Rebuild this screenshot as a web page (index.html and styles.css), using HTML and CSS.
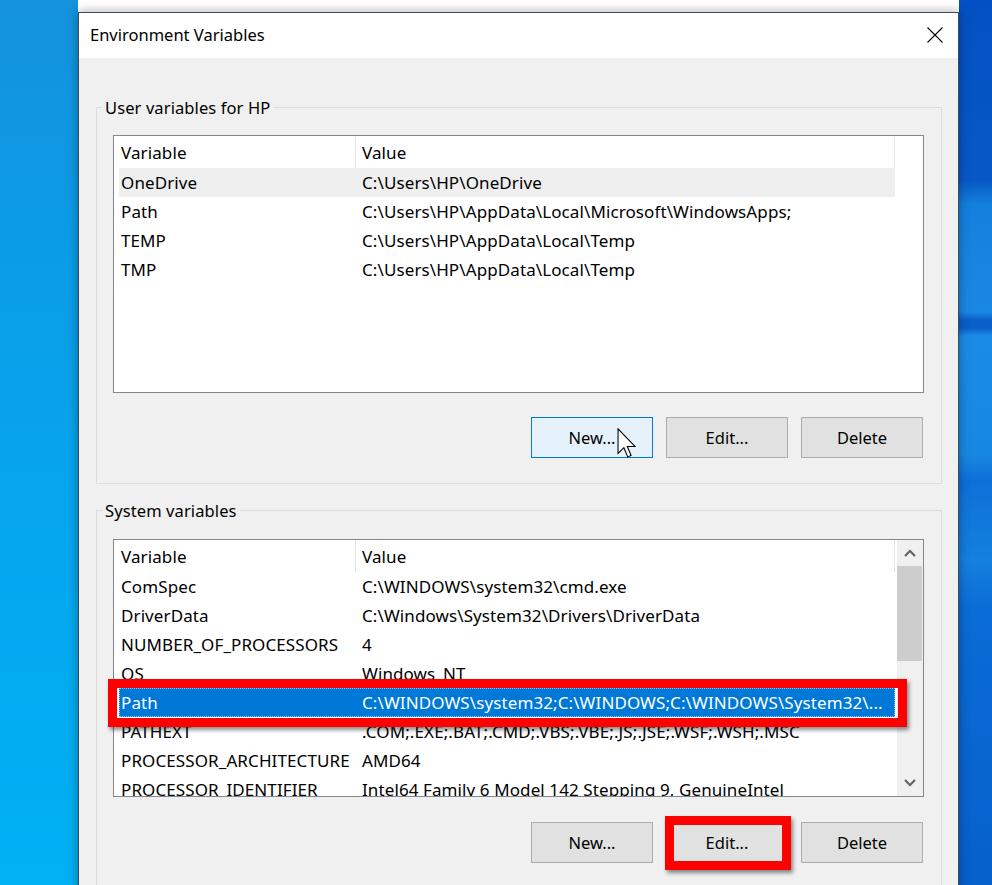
FILE: index.html
```html
<!DOCTYPE html>
<html lang="en">
<head>
  <meta charset="UTF-8">
  <title>Environment Variables</title>
  <link rel="stylesheet" href="styles.css">
</head>
<body>
  <div class="desktop">
    <div class="desk-left"></div>

    <div class="dialog">
      <div class="titlebar">
        <span class="title">Environment Variables</span>
        <svg class="close" width="16" height="16" viewBox="0 0 16 16">
          <path d="M0.5 0.5 L15.5 15.5 M15.5 0.5 L0.5 15.5" stroke="#000" stroke-width="1.1" fill="none"/>
        </svg>
      </div>

      <div class="dialog-body">
        <!-- user variables -->
        <div class="group group-user">
          <div class="group-label">User variables for HP</div>
          <div class="listbox">
            <div class="list-content">
              <div class="list-head"><span class="col-var">Variable</span><span class="col-val">Value</span></div>
              <div class="row hover"><span class="cell-var">OneDrive</span><span class="cell-val">C:\Users\HP\OneDrive</span></div>
              <div class="row"><span class="cell-var">Path</span><span class="cell-val">C:\Users\HP\AppData\Local\Microsoft\WindowsApps;</span></div>
              <div class="row"><span class="cell-var">TEMP</span><span class="cell-val">C:\Users\HP\AppData\Local\Temp</span></div>
              <div class="row"><span class="cell-var">TMP</span><span class="cell-val">C:\Users\HP\AppData\Local\Temp</span></div>
            </div>
            <div class="scroll-space"></div>
          </div>
          <div class="buttons">
            <button class="btn hot">New...</button>
            <button class="btn">Edit...</button>
            <button class="btn">Delete</button>
          </div>
        </div>

        <!-- system variables -->
        <div class="group group-system">
          <div class="group-label">System variables</div>
          <div class="listbox">
            <div class="list-content">
              <div class="list-head"><span class="col-var">Variable</span><span class="col-val">Value</span></div>
              <div class="row"><span class="cell-var">ComSpec</span><span class="cell-val">C:\WINDOWS\system32\cmd.exe</span></div>
              <div class="row"><span class="cell-var">DriverData</span><span class="cell-val">C:\Windows\System32\Drivers\DriverData</span></div>
              <div class="row"><span class="cell-var">NUMBER_OF_PROCESSORS</span><span class="cell-val">4</span></div>
              <div class="row"><span class="cell-var">OS</span><span class="cell-val">Windows_NT</span></div>
              <div class="row selected"><span class="cell-var">Path</span><span class="cell-val">C:\WINDOWS\system32;C:\WINDOWS;C:\WINDOWS\System32\...</span></div>
              <div class="row"><span class="cell-var">PATHEXT</span><span class="cell-val">.COM;.EXE;.BAT;.CMD;.VBS;.VBE;.JS;.JSE;.WSF;.WSH;.MSC</span></div>
              <div class="row"><span class="cell-var">PROCESSOR_ARCHITECTURE</span><span class="cell-val">AMD64</span></div>
              <div class="row"><span class="cell-var">PROCESSOR_IDENTIFIER</span><span class="cell-val">Intel64 Family 6 Model 142 Stepping 9, GenuineIntel</span></div>
            </div>
            <div class="scrollbar">
              <div class="sb-arrow">
                <svg width="12" height="8" viewBox="0 0 12 8"><path d="M1 7 L6 2 L11 7" stroke="#606060" stroke-width="2" fill="none"/></svg>
              </div>
              <div class="sb-thumb"></div>
              <div class="sb-track"></div>
              <div class="sb-arrow">
                <svg width="12" height="8" viewBox="0 0 12 8"><path d="M1 1 L6 6 L11 1" stroke="#606060" stroke-width="2" fill="none"/></svg>
              </div>
            </div>
          </div>
          <div class="buttons">
            <button class="btn">New...</button>
            <button class="btn">Edit...</button>
            <button class="btn">Delete</button>
          </div>
        </div>
      </div>
    </div>

    <div class="desk-right"></div>

    <!-- annotations drawn over the screenshot -->
    <div class="mark mark-path"></div>
    <div class="mark mark-edit"></div>
    <svg class="cursor" width="19" height="30" viewBox="0 0 12 19.5">
      <path d="M0.5 0.5 L0.5 16.5 L4.3 12.8 L6.8 18.8 L9 17.9 L6.5 12 L11.5 12 Z" fill="#fff" stroke="#000" stroke-width="0.7" stroke-linejoin="miter"/>
    </svg>
  </div>
</body>
</html>
```

FILE: styles.css
```css
/* page + desktop */
html, body {
  margin: 0;
  padding: 0;
}
body {
  width: 992px;
  height: 885px;
  overflow: hidden;
  font-family: "Noto Sans", "Open Sans", sans-serif;
  font-size: 16.5px;
  color: #000;
}
.desktop {
  position: relative;
  display: flex;
  height: 885px;
  overflow: hidden;
}
.desk-left {
  width: 78px;
  flex: none;
  background: linear-gradient(to bottom, #1592dd 0, #0c9be6 25%, #06a5ee 55%, #00b1f4 100%);
}
.desk-right {
  flex: 1;
  background: linear-gradient(to bottom,
    #0350c2 0, #0758c6 180px, #1480dd 205px, #1a88e2 312px,
    #0a5fca 320px, #0a5fca 328px, #1b8ce6 336px, #1788e2 455px,
    #0d70d8 480px, #1480df 560px, #0a6cd6 610px, #0660cc 100%);
}

/* dialog window */
.dialog {
  flex: none;
  width: 881px;
  height: 1000px;
  margin-top: 12px;
  box-sizing: border-box;
  border: 1px solid #3d4a5a;
  background: #f0f0f0;
  box-shadow: 0 0 10px rgba(0, 0, 0, 0.35);
  position: relative;
  z-index: 1;
}
.titlebar {
  height: 45px;
  background: #fff;
  display: flex;
  align-items: center;
  padding: 0 15px 0 11px;
}
.title {
  flex: 1;
  padding-bottom: 2px;
}
.close {
  display: block;
  margin-top: -2px;
}

.dialog-body {
  padding: 0 16px 0 17px;
}

/* group boxes */
.group {
  border: 1px solid #dcdcdc;
  padding: 0 17px 25px 16px;
}
.group-user {
  margin-top: 49px;
}
.group-system {
  margin-top: 26px;
}
.group-label {
  width: fit-content;
  margin: -11px 0 0 -11px;
  padding: 0 3px;
  line-height: 22px;
  background: #f0f0f0;
  letter-spacing: 0.1px;
}
.group-user .group-label {
  margin-bottom: 16px;
}
.group-system .group-label {
  margin-bottom: 17px;
}

/* list views */
.listbox {
  display: flex;
  height: 258px;
  box-sizing: border-box;
  border: 1px solid #82878f;
  background: #fff;
  overflow: hidden;
  font-size: 17px;
  letter-spacing: 0.1px;
}
.list-content {
  flex: 1;
  padding-left: 5px;
  overflow: hidden;
}
.scroll-space {
  width: 26px;
}
.list-head {
  display: flex;
  width: 776px;
  height: 32px;
  line-height: 34px;
}
.col-var {
  width: 237px;
  box-sizing: border-box;
  padding-left: 2px;
  border-right: 1px solid #e5e5e5;
}
.col-val {
  flex: 1;
  padding-left: 6px;
  border-right: 1px solid #e5e5e5;
}
.row {
  display: flex;
  width: 776px;
  height: 29px;
  line-height: 30px;
  white-space: nowrap;
}
.cell-var {
  width: 237px;
  padding-left: 2px;
  box-sizing: border-box;
}
.cell-val {
  padding-left: 6px;
}
.row.hover {
  background: #efefef;
}
.row.selected {
  background: #0078d7;
  color: #fff;
  outline: 1px dotted #8cc4ef;
  outline-offset: -1px;
}

/* scrollbar */
.scrollbar {
  width: 26px;
  background: #f0f0f0;
  display: flex;
  flex-direction: column;
}
.sb-arrow {
  height: 26px;
  display: flex;
  align-items: center;
  justify-content: center;
}
.sb-thumb {
  height: 95px;
  margin-right: 1px;
  background: #cdcdcd;
}
.sb-track {
  flex: 1;
}

/* buttons */
.buttons {
  display: flex;
  justify-content: flex-end;
  gap: 13px;
  padding-right: 1px;
}
.group-user .buttons {
  margin-top: 24px;
}
.group-system .buttons {
  margin-top: 25px;
}
.btn {
  width: 122px;
  height: 41px;
  box-sizing: border-box;
  border: 1px solid #adadad;
  background: #e1e1e1;
  font: inherit;
  color: #000;
  padding: 0 0 1px;
}
.btn.hot {
  border-color: #0078d7;
  background: #e5f1fb;
}

/* red highlight boxes + mouse pointer */
.mark {
  position: absolute;
  z-index: 2;
  box-sizing: border-box;
  border: 9px solid #ff0000;
  box-shadow: 2px 3px 4px rgba(0, 0, 0, 0.45);
}
.mark-path {
  left: 108px;
  top: 679px;
  width: 799px;
  height: 48px;
}
.mark-edit {
  left: 665px;
  top: 816px;
  width: 126px;
  height: 54px;
}
.cursor {
  position: absolute;
  z-index: 3;
  left: 617px;
  top: 428px;
}
```
